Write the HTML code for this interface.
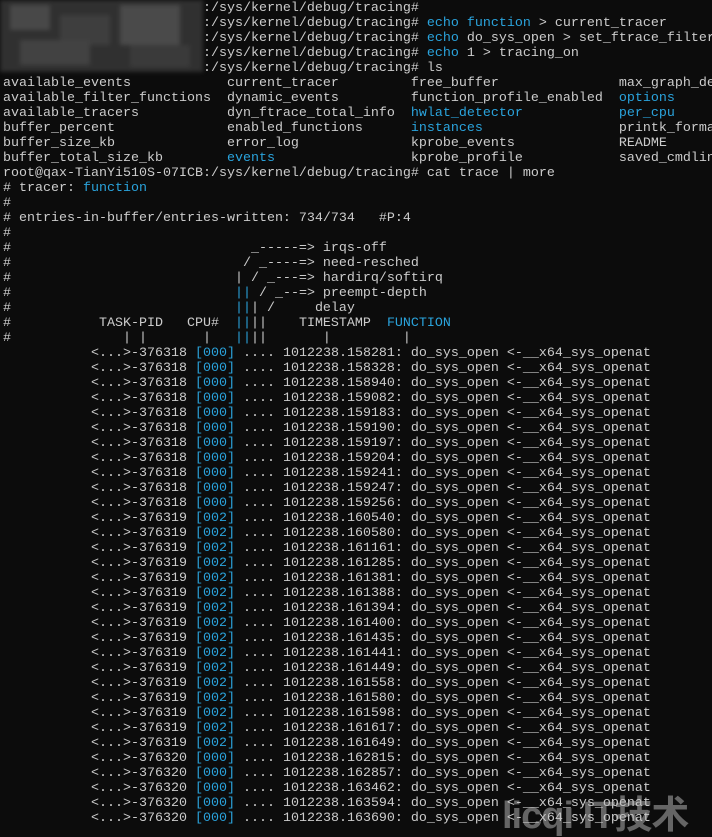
<!DOCTYPE html>
<html><head><meta charset="utf-8"><style>
html,body{margin:0;padding:0;background:#0c0c0c;width:712px;height:834px;overflow:hidden}
pre{margin:0;position:absolute;left:3px;top:1px;font-family:"Liberation Mono",monospace;font-size:13.33px;line-height:15px;color:#cccccc;white-space:pre}
.b{color:#2aa3dc}
#blur{position:absolute;left:0;top:0;width:203px;height:72px;background:#303030;filter:blur(2px)}
#blur i{position:absolute;display:block}
#wm{position:absolute;left:502px;top:796px;font-family:"Liberation Sans","Noto Sans CJK SC",sans-serif;font-weight:bold;font-size:38px;line-height:40px;color:rgba(190,190,190,0.5);white-space:nowrap;letter-spacing:-1px}
</style></head><body>
<div id="blur">
<i style="left:10px;top:5px;width:40px;height:25px;background:#484848"></i>
<i style="left:60px;top:15px;width:50px;height:30px;background:#3e3e3e"></i>
<i style="left:120px;top:5px;width:60px;height:40px;background:#4a4a4a"></i>
<i style="left:20px;top:40px;width:70px;height:25px;background:#424242"></i>
<i style="left:130px;top:45px;width:60px;height:22px;background:#3a3a3a"></i>
</div>
<pre>                         :/sys/kernel/debug/tracing#
                         :/sys/kernel/debug/tracing# <span class="b">echo</span> <span class="b">function</span> &gt; current_tracer
                         :/sys/kernel/debug/tracing# <span class="b">echo</span> do_sys_open &gt; set_ftrace_filter
                         :/sys/kernel/debug/tracing# <span class="b">echo</span> 1 &gt; tracing_on
                         :/sys/kernel/debug/tracing# ls
available_events            current_tracer         free_buffer               max_graph_depth
available_filter_functions  dynamic_events         function_profile_enabled  <span class="b">options</span>
available_tracers           dyn_ftrace_total_info  <span class="b">hwlat_detector</span>            <span class="b">per_cpu</span>
buffer_percent              enabled_functions      <span class="b">instances</span>                 printk_formats
buffer_size_kb              error_log              kprobe_events             README
buffer_total_size_kb        <span class="b">events</span>                 kprobe_profile            saved_cmdlines
root@qax-TianYi510S-07ICB:/sys/kernel/debug/tracing# cat trace | more
# tracer: <span class="b">function</span>
#
# entries-in-buffer/entries-written: 734/734   #P:4
#
#                              _-----=> irqs-off
#                             / _----=> need-resched
#                            | / _---=> hardirq/softirq
#                            <span class="b">||</span> / _--=> preempt-depth
#                            <span class="b">||</span>| /     delay
#           TASK-PID   CPU#  <span class="b">||</span>||    TIMESTAMP  <span class="b">FUNCTION</span>
#              | |       |   <span class="b">||</span>||       |         |
           &lt;...&gt;-376318 <span class="b">[000]</span> .... 1012238.158281: do_sys_open &lt;-__x64_sys_openat
           &lt;...&gt;-376318 <span class="b">[000]</span> .... 1012238.158328: do_sys_open &lt;-__x64_sys_openat
           &lt;...&gt;-376318 <span class="b">[000]</span> .... 1012238.158940: do_sys_open &lt;-__x64_sys_openat
           &lt;...&gt;-376318 <span class="b">[000]</span> .... 1012238.159082: do_sys_open &lt;-__x64_sys_openat
           &lt;...&gt;-376318 <span class="b">[000]</span> .... 1012238.159183: do_sys_open &lt;-__x64_sys_openat
           &lt;...&gt;-376318 <span class="b">[000]</span> .... 1012238.159190: do_sys_open &lt;-__x64_sys_openat
           &lt;...&gt;-376318 <span class="b">[000]</span> .... 1012238.159197: do_sys_open &lt;-__x64_sys_openat
           &lt;...&gt;-376318 <span class="b">[000]</span> .... 1012238.159204: do_sys_open &lt;-__x64_sys_openat
           &lt;...&gt;-376318 <span class="b">[000]</span> .... 1012238.159241: do_sys_open &lt;-__x64_sys_openat
           &lt;...&gt;-376318 <span class="b">[000]</span> .... 1012238.159247: do_sys_open &lt;-__x64_sys_openat
           &lt;...&gt;-376318 <span class="b">[000]</span> .... 1012238.159256: do_sys_open &lt;-__x64_sys_openat
           &lt;...&gt;-376319 <span class="b">[002]</span> .... 1012238.160540: do_sys_open &lt;-__x64_sys_openat
           &lt;...&gt;-376319 <span class="b">[002]</span> .... 1012238.160580: do_sys_open &lt;-__x64_sys_openat
           &lt;...&gt;-376319 <span class="b">[002]</span> .... 1012238.161161: do_sys_open &lt;-__x64_sys_openat
           &lt;...&gt;-376319 <span class="b">[002]</span> .... 1012238.161285: do_sys_open &lt;-__x64_sys_openat
           &lt;...&gt;-376319 <span class="b">[002]</span> .... 1012238.161381: do_sys_open &lt;-__x64_sys_openat
           &lt;...&gt;-376319 <span class="b">[002]</span> .... 1012238.161388: do_sys_open &lt;-__x64_sys_openat
           &lt;...&gt;-376319 <span class="b">[002]</span> .... 1012238.161394: do_sys_open &lt;-__x64_sys_openat
           &lt;...&gt;-376319 <span class="b">[002]</span> .... 1012238.161400: do_sys_open &lt;-__x64_sys_openat
           &lt;...&gt;-376319 <span class="b">[002]</span> .... 1012238.161435: do_sys_open &lt;-__x64_sys_openat
           &lt;...&gt;-376319 <span class="b">[002]</span> .... 1012238.161441: do_sys_open &lt;-__x64_sys_openat
           &lt;...&gt;-376319 <span class="b">[002]</span> .... 1012238.161449: do_sys_open &lt;-__x64_sys_openat
           &lt;...&gt;-376319 <span class="b">[002]</span> .... 1012238.161558: do_sys_open &lt;-__x64_sys_openat
           &lt;...&gt;-376319 <span class="b">[002]</span> .... 1012238.161580: do_sys_open &lt;-__x64_sys_openat
           &lt;...&gt;-376319 <span class="b">[002]</span> .... 1012238.161598: do_sys_open &lt;-__x64_sys_openat
           &lt;...&gt;-376319 <span class="b">[002]</span> .... 1012238.161617: do_sys_open &lt;-__x64_sys_openat
           &lt;...&gt;-376319 <span class="b">[002]</span> .... 1012238.161649: do_sys_open &lt;-__x64_sys_openat
           &lt;...&gt;-376320 <span class="b">[000]</span> .... 1012238.162815: do_sys_open &lt;-__x64_sys_openat
           &lt;...&gt;-376320 <span class="b">[000]</span> .... 1012238.162857: do_sys_open &lt;-__x64_sys_openat
           &lt;...&gt;-376320 <span class="b">[000]</span> .... 1012238.163462: do_sys_open &lt;-__x64_sys_openat
           &lt;...&gt;-376320 <span class="b">[000]</span> .... 1012238.163594: do_sys_open &lt;-__x64_sys_openat
           &lt;...&gt;-376320 <span class="b">[000]</span> .... 1012238.163690: do_sys_open &lt;-__x64_sys_openat
</pre>
<div id="wm">licqi IT技术</div>
</body></html>
